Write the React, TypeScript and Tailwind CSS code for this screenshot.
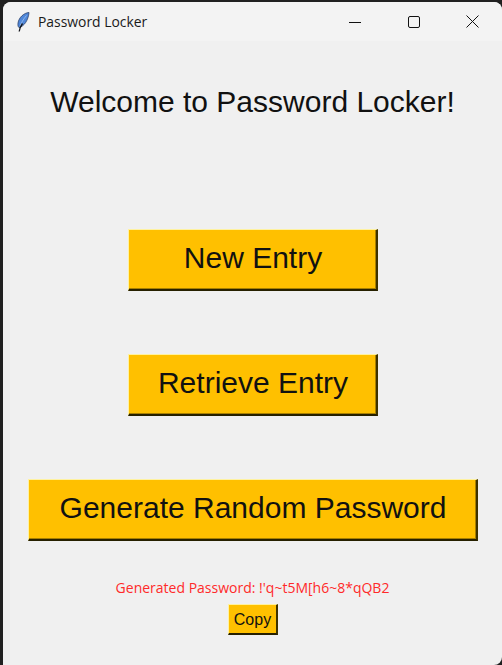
const sans = "font-['Liberation_Sans',Arial,sans-serif]";

function Feather() {
  return (
    <svg width="13" height="20" viewBox="0 0 13 20" className="shrink-0">
      <path d="M12 0.5C7 0.8 1.8 5.5 1 11C0.7 13 1 14.8 2 15.6C7 14.5 11.5 8 12 0.5Z" fill="#4f86d8" stroke="#24375e" strokeWidth="0.7" />
      <path d="M9.5 3.5C6.5 7 4 11 3 14.5" fill="none" stroke="#9cc0ef" strokeWidth="0.8" />
      <path d="M5.5 11.5C4 13.5 2.8 16 2.2 19.5" fill="none" stroke="#14161c" strokeWidth="1.3" />
    </svg>
  );
}

function WinButton({ children }: { children: React.ReactNode }) {
  return <div className="w-[59px] h-full flex items-center justify-center">{children}</div>;
}

function LockerButton({ label, width, className }: { label: string; width: string; className?: string }) {
  return (
    <button
      className={`${width} ${sans} h-[62px] pb-[3px] pl-[2px] bg-[#ffc000] text-[#111] text-[30px] leading-none border border-t-[#fff2a0] border-l-[#fff2a0] border-r-[#3c3200] border-b-[#262000] border-b-2 border-r-2 shadow-[inset_0_-1px_0_#a88000,inset_-1px_0_0_#a88000] ${className ?? ""}`}
    >
      {label}
    </button>
  );
}

export default function App() {
  return (
    <div className="w-[502px] h-[665px] bg-[#202020] pt-[2px] pl-[3px] overflow-hidden">
      <div className="w-[499px] h-[663px] bg-[#f0f0f0] rounded-tl-[8px] rounded-tr-[8px] rounded-br-[8px] overflow-hidden flex flex-col">
        <div className="h-[39px] bg-[#f3f3f3] flex items-center shrink-0">
          <div className="pl-[14px] pr-[8px] flex items-center">
            <Feather />
          </div>
          <span className="font-['Open_Sans',sans-serif] text-[13.9px] text-[#1a1a1a] leading-none">Password Locker</span>
          <div className="ml-auto flex items-center h-full">
            <WinButton>
              <svg width="12" height="12" viewBox="0 0 12 12"><path d="M0 6.5H12" stroke="#111" strokeWidth="1" /></svg>
            </WinButton>
            <WinButton>
              <svg width="12" height="12" viewBox="0 0 12 12"><rect x="0.5" y="0.5" width="11" height="11" rx="1.5" fill="none" stroke="#111" strokeWidth="1" /></svg>
            </WinButton>
            <WinButton>
              <svg width="13" height="13" viewBox="0 0 13 13"><path d="M0.5 0.5L12.5 12.5M12.5 0.5L0.5 12.5" stroke="#111" strokeWidth="1" /></svg>
            </WinButton>
          </div>
        </div>

        <div className="flex flex-col items-center flex-1">
          <h1 className={`${sans} mt-[43px] text-[30px] leading-[36px] text-[#111] font-normal`}>Welcome to Password Locker!</h1>
          <LockerButton label="New Entry" width="w-[250px]" className="mt-[109px]" />
          <LockerButton label="Retrieve Entry" width="w-[250px]" className="mt-[63px]" />
          <LockerButton label="Generate Random Password" width="w-[450px]" className="mt-[63px]" />
          <p className="font-['Open_Sans',sans-serif] mt-[37px] text-[14px] leading-[20px] text-[#ff2a2a]">Generated Password: !'q~t5M[h6~8*qQB2</p>
          <button className={`${sans} mt-[6px] w-[50px] h-[31px] pt-[1px] pl-[1px] bg-[#ffc000] text-[#111] text-[16px] leading-none border border-t-[#fff2a0] border-l-[#fff2a0] border-r-[#3c3200] border-b-[#262000] border-b-2 border-r-2`}>
            Copy
          </button>
        </div>
      </div>
    </div>
  );
}
